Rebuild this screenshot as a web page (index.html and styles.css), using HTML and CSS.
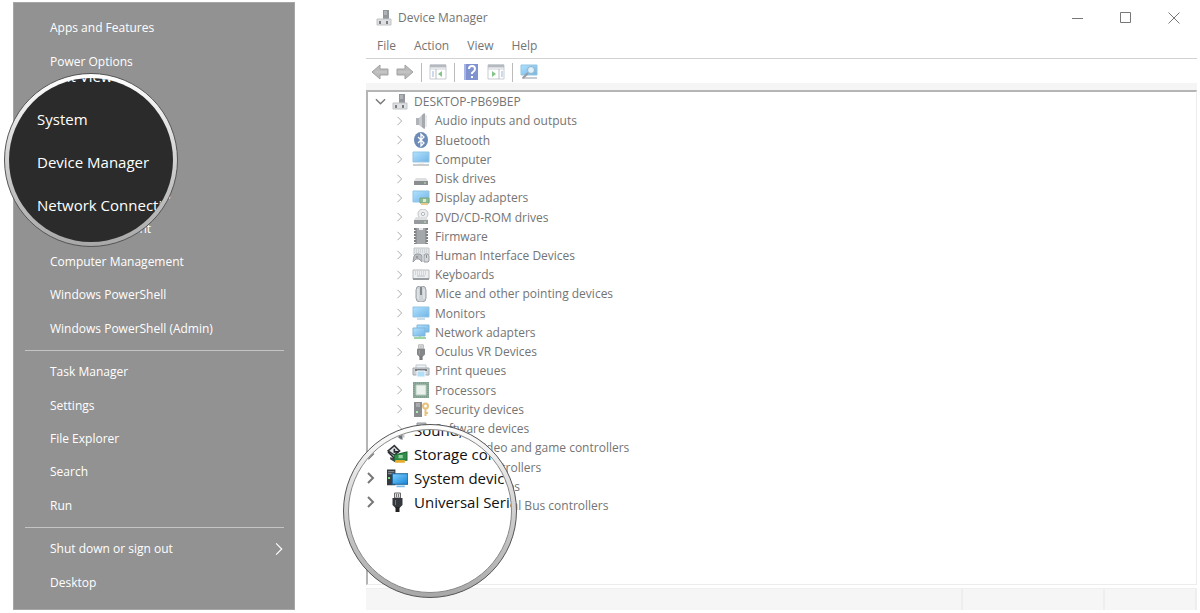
FILE: index.html
```html
<!DOCTYPE html>
<html lang="en">
<head>
    <meta charset="UTF-8">
    <meta name="viewport" content="width=device-width, initial-scale=1.0">
    <title>Device Manager</title>
    <link rel="stylesheet" href="styles.css">
</head>
<body>
    <svg class="sprite" aria-hidden="true">
        <linearGradient id="screen" x1="0" y1="0" x2="1" y2="1">
            <stop offset="0" stop-color="#7fd0ff"/>
            <stop offset="1" stop-color="#1583d6"/>
        </linearGradient>
        <symbol id="computer-root" viewBox="0 0 16 16">
            <path d="M7 0h6v9H7z" fill="#4c5258"/>
            <path d="M8 2h3M8 4h3" stroke="#aab0b5"/>
            <path d="M1 9h14v6H1z" fill="#c9cdd1" stroke="#979da3"/>
            <path d="M3 11h2v3H3zM10 11h2v3h-2z" fill="#22262a"/>
        </symbol>
        <symbol id="speaker" viewBox="0 0 16 16">
            <path d="M3 5h3v7H3z" fill="#7c8288"/>
            <path d="M6 5l5-5v16l-5-4z" fill="#a3a8ad"/>
            <path d="M9 2l3-2v16l-3-2z" fill="#6a7076"/>
            <path d="M13 2v12" stroke="#b5babf"/>
        </symbol>
        <symbol id="bluetooth" viewBox="0 0 16 16">
            <ellipse cx="8" cy="8" rx="7" ry="8" fill="#0b3f86"/>
            <path d="M5 5l6 6-3 3V2l3 3-6 6" fill="none" stroke="#fff" stroke-width="1.3"/>
        </symbol>
        <symbol id="computer" viewBox="0 0 18 16">
            <path d="M1 1h16v10H1z" fill="url(#screen)" stroke="#4d9fd0"/>
            <path d="M1 14h16" stroke="#8a9299" stroke-width="1.500"/>
            <path d="M6 12h6" stroke="#d0d4d8"/>
        </symbol>
        <symbol id="disk" viewBox="0 0 16 16">
            <path d="M3 7h10l2 3H1z" fill="#c8cbce"/>
            <path d="M1 10h14v4H1z" fill="#3d4247"/>
            <path d="M11 12h2" stroke="#7be37b"/>
        </symbol>
        <symbol id="display" viewBox="0 0 18 16">
            <path d="M1 1h16v11H1z" fill="url(#screen)" stroke="#4d9fd0"/>
            <path d="M8 8h9v5H8z" fill="#3f9350" stroke="#2b6b38"/>
            <path d="M9 14h7" stroke="#e0a93a" stroke-width="2"/>
            <path d="M11 9h3v3h-3z" fill="#c8dfa5"/>
        </symbol>
        <symbol id="dvd" viewBox="0 0 16 16">
            <circle cx="10" cy="5" r="5" fill="#e0e2e4" stroke="#9a9fa4"/>
            <circle cx="10" cy="5" r="1.6" fill="#fff" stroke="#80868c"/>
            <path d="M3 8h10l2 3H1z" fill="#c8cbce"/>
            <path d="M1 11h14v4H1z" fill="#54595e"/>
            <path d="M11 13h2" stroke="#7be37b"/>
        </symbol>
        <symbol id="firmware" viewBox="0 0 16 16">
            <path d="M3 0h10v16H3z" fill="#6b6f73"/>
            <path d="M2 0v16M14 0v16" stroke="#2a2d30" stroke-width="2" stroke-dasharray="2 1"/>
            <path d="M3 0v16M13 0v16" stroke="#2a2d30"/>
            <path d="M6 0h4v2H6z" fill="#ddd"/>
        </symbol>
        <symbol id="hid" viewBox="0 0 18 16">
            <path d="M2 1h15v7H2z" fill="#d5d9dd" stroke="#989ea4"/>
            <path d="M4 3h11M4 5h11" stroke="#8d949b" stroke-dasharray="1 1"/>
            <path d="M1 15l1-6 2-2h4l2 2v6l-3-3H4z" fill="#8d949c" stroke="#565d64"/>
            <path d="M12 15V9l1-2h3l1 2v5l-1 1z" fill="#b7bdc4" stroke="#565d64"/>
            <path d="M14.500 8v3M5 9v2M4 10h2" stroke="#3b4148"/>
        </symbol>
        <symbol id="keyboard" viewBox="0 0 18 16">
            <path d="M1 3h16v9H1z" fill="#e2e4e6" stroke="#898f95"/>
            <path d="M3 5h12M3 7h12" stroke="#8d9399" stroke-dasharray="1 1"/>
            <path d="M5 9h8" stroke="#8d9399"/>
            <path d="M1 12h16" stroke="#565c62" stroke-width="2"/>
        </symbol>
        <symbol id="mouse" viewBox="0 0 16 16">
            <rect x="3" y="0" width="10" height="16" rx="4" fill="#aeb6bf" stroke="#5d656e"/>
            <path d="M8 1v8" stroke="#2f3840" stroke-width="2"/>
            <path d="M5 3v10M11 3v10" stroke="#e2e6ea"/>
        </symbol>
        <symbol id="monitor" viewBox="0 0 18 16">
            <path d="M1 2h16v10H1z" fill="url(#screen)" stroke="#4d9fd0"/>
            <path d="M5 14h8" stroke="#a8c5d8" stroke-width="2"/>
        </symbol>
        <symbol id="network" viewBox="0 0 18 16">
            <path d="M5 1h12v7H5z" fill="url(#screen)" stroke="#2f87c0"/>
            <path d="M1 4h12v8H1z" fill="url(#screen)" stroke="#2f87c0"/>
            <path d="M2 14h12" stroke="#5db867" stroke-width="2"/>
            <path d="M8 12v3" stroke="#5db867" stroke-width="2"/>
        </symbol>
        <symbol id="usb" viewBox="0 0 16 20">
            <path d="M5 1h6v5H5z" fill="#e4e4e4" stroke="#6b6b6b"/>
            <path d="M7 2v3M9 2v3" stroke="#777"/>
            <path d="M3 6h10v7l-3 3H6l-3-3z" fill="#34383c"/>
            <path d="M6 15h4v5H6z" fill="#222"/>
            <path d="M6 8v5" stroke="#777"/>
        </symbol>
        <symbol id="printer" viewBox="0 0 18 16">
            <path d="M4 2h10v4H4z" fill="#e6eef5" stroke="#9aa4ad"/>
            <path d="M1 5h16v7H1z" fill="#aeb5bc" stroke="#6a727a"/>
            <path d="M3 7h12" stroke="#222a32" stroke-width="2"/>
            <path d="M5 8h8v6H5z" fill="#7ec8f5" stroke="#f4f9fc"/>
        </symbol>
        <symbol id="cpu" viewBox="0 0 16 16">
            <path d="M0 0h16v16H0z" fill="#2d6044"/>
            <path d="M3 3h10v10H3z" fill="#dfe8e2" stroke="#8fb09c"/>
            <path d="M1 1h14v14H1z" fill="none" stroke="#5d8a70" stroke-dasharray="1 1"/>
        </symbol>
        <symbol id="security" viewBox="0 0 16 16">
            <path d="M1 1h8v15H1z" fill="#3c4146"/>
            <path d="M3 3h4M3 5h4" stroke="#a8adb2"/>
            <path d="M3 10h2v2H3z" fill="#7be37b"/>
            <circle cx="12.500" cy="5" r="2.500" fill="#fff" stroke="#d99a26" stroke-width="2"/>
            <path d="M12.500 8v7M12 12h3" stroke="#d99a26" stroke-width="2"/>
        </symbol>
        <symbol id="software" viewBox="0 0 16 16">
            <path d="M4 2h9v12H4z" fill="#8d949b" stroke="#4c5258"/>
            <path d="M6 5h5M6 7h5" stroke="#eee"/>
        </symbol>
        <symbol id="storage" viewBox="0 0 20 18">
            <path d="M1 6l6-5 5 5-5 4z" fill="#e0e2e4" stroke="#33383d" stroke-width="1.500"/>
            <path d="M7 4v3h4M1 7l6 6" fill="none" stroke="#25292d" stroke-width="1.500"/>
            <path d="M3 12l5 1v4l-5-3z" fill="#40454a"/>
            <path d="M7 10l12-3v8H7z" fill="#2f8f4a" stroke="#1c6530"/>
            <path d="M11 10h4v3h-4z" fill="#95cfa2"/>
            <path d="M8 16h9" stroke="#e4ac2f" stroke-width="2.500"/>
        </symbol>
        <symbol id="system" viewBox="0 0 20 18">
            <path d="M0 1h8v15H0z" fill="#353b41"/>
            <path d="M1 3h6M1 5h6" stroke="#98a0a8"/>
            <path d="M1 8h2v2H1z" fill="#7be37b"/>
            <path d="M5 5h15v10H5z" fill="url(#screen)" stroke="#1b5f94"/>
            <path d="M9 17h8" stroke="#7ec0ea" stroke-width="1.500"/>
        </symbol>
        <symbol id="chevron" viewBox="0 0 8 12">
            <path d="M1 1l5 5-5 5" fill="none" stroke="currentColor"/>
        </symbol>
        <symbol id="arrow" viewBox="0 0 18 16">
            <path d="M1 8l8-7v4h8v6H9v4z" fill="#8e8e8e" stroke="#666"/>
            <path d="M4 8h12" stroke="#aaa"/>
        </symbol>
        <symbol id="panel" viewBox="0 0 18 16">
            <path d="M1 1h16v14H1z" fill="#fff" stroke="#a3abb3"/>
            <path d="M1 2h16" stroke="#848d98" stroke-width="3"/>
            <path d="M1 5h16" stroke="#aab2ba"/>
        </symbol>
    </svg>

    <nav class="power-menu" aria-label="Quick links">
        <button>Apps and Features</button>
        <button>Power Options</button>
        <button>Event Viewer</button>
        <button>System</button>
        <button>Device Manager</button>
        <button>Network Connections</button>
        <button>Disk Management</button>
        <button>Computer Management</button>
        <button>Windows PowerShell</button>
        <button>Windows PowerShell (Admin)</button>
        <hr>
        <button>Task Manager</button>
        <button>Settings</button>
        <button>File Explorer</button>
        <button>Search</button>
        <button>Run</button>
        <hr>
        <button>Shut down or sign out <svg class="more"><use href="#chevron"/></svg></button>
        <button>Desktop</button>
    </nav>

    <main class="window">
        <header class="title-bar">
            <svg class="icon"><use href="#computer-root"/></svg>
            <h1>Device Manager</h1>
            <div class="window-buttons">
                <button aria-label="Minimize"><svg viewBox="0 0 12 12"><path d="M0 6.500h11"/></svg></button>
                <button aria-label="Maximize"><svg viewBox="0 0 12 12"><path d="M.5.500h10v10H.5z"/></svg></button>
                <button aria-label="Close"><svg viewBox="0 0 12 12"><path d="M.5.500l11 11M11.500.500l-11 11"/></svg></button>
            </div>
        </header>
        <div class="menu-bar">
            <button>File</button>
            <button>Action</button>
            <button>View</button>
            <button>Help</button>
        </div>
        <div class="toolbar">
            <button aria-label="Back"><svg><use href="#arrow"/></svg></button>
            <button aria-label="Forward"><svg class="flip"><use href="#arrow"/></svg></button>
            <span class="separator"></span>
            <button aria-label="Show console tree"><svg viewBox="0 0 18 16"><use href="#panel"/><path d="M7 5v10" stroke="#8c959e"/><path d="M3 8h2M3 10h2M3 12h2" stroke="#5b84b8"/><path d="M13 7v6l-4-3z" fill="#31a03c"/></svg></button>
            <span class="separator"></span>
            <button aria-label="Help"><svg viewBox="0 0 18 16"><path d="M2 0h14v16H2z" fill="#2c4bb0"/><path d="M2 0h2v16H2z" fill="#6d86d6"/><path d="M7 5q0-3 3-3t3 3q0 2-3 4v1M10 12v2" fill="none" stroke="#fff" stroke-width="2"/></svg></button>
            <button aria-label="Show action pane"><svg viewBox="0 0 18 16"><use href="#panel"/><path d="M12 5v10" stroke="#8c959e"/><path d="M14 8h2M14 10h2M14 12h2" stroke="#5b84b8"/><path d="M5 7v6l4-3z" fill="#31a03c"/></svg></button>
            <span class="separator"></span>
            <button aria-label="Scan for hardware changes"><svg viewBox="0 0 18 16"><path d="M1 1h16v10H1z" fill="url(#screen)" stroke="#4d9fd0"/><path d="M2 14h15" stroke="#a5abb1" stroke-width="2"/><circle cx="11" cy="6" r="3.500" fill="#c5e8fb" stroke="#4b7c9c"/><path d="M8 9l-5 5" stroke="#4f5a63" stroke-width="2"/></svg></button>
        </div>

        <ul class="tree">
            <li class="root"><svg class="open" viewBox="0 0 12 8"><path d="M1 1l5 5 5-5"/></svg><svg class="icon"><use href="#computer-root"/></svg>DESKTOP-PB69BEP</li>
            <li><svg class="arrow"><use href="#chevron"/></svg><svg class="icon"><use href="#speaker"/></svg>Audio inputs and outputs</li>
            <li><svg class="arrow"><use href="#chevron"/></svg><svg class="icon"><use href="#bluetooth"/></svg>Bluetooth</li>
            <li><svg class="arrow"><use href="#chevron"/></svg><svg class="icon"><use href="#computer"/></svg>Computer</li>
            <li><svg class="arrow"><use href="#chevron"/></svg><svg class="icon"><use href="#disk"/></svg>Disk drives</li>
            <li><svg class="arrow"><use href="#chevron"/></svg><svg class="icon"><use href="#display"/></svg>Display adapters</li>
            <li><svg class="arrow"><use href="#chevron"/></svg><svg class="icon"><use href="#dvd"/></svg>DVD/CD-ROM drives</li>
            <li><svg class="arrow"><use href="#chevron"/></svg><svg class="icon"><use href="#firmware"/></svg>Firmware</li>
            <li><svg class="arrow"><use href="#chevron"/></svg><svg class="icon"><use href="#hid"/></svg>Human Interface Devices</li>
            <li><svg class="arrow"><use href="#chevron"/></svg><svg class="icon"><use href="#keyboard"/></svg>Keyboards</li>
            <li><svg class="arrow"><use href="#chevron"/></svg><svg class="icon"><use href="#mouse"/></svg>Mice and other pointing devices</li>
            <li><svg class="arrow"><use href="#chevron"/></svg><svg class="icon"><use href="#monitor"/></svg>Monitors</li>
            <li><svg class="arrow"><use href="#chevron"/></svg><svg class="icon"><use href="#network"/></svg>Network adapters</li>
            <li><svg class="arrow"><use href="#chevron"/></svg><svg class="icon"><use href="#usb"/></svg>Oculus VR Devices</li>
            <li><svg class="arrow"><use href="#chevron"/></svg><svg class="icon"><use href="#printer"/></svg>Print queues</li>
            <li><svg class="arrow"><use href="#chevron"/></svg><svg class="icon"><use href="#cpu"/></svg>Processors</li>
            <li><svg class="arrow"><use href="#chevron"/></svg><svg class="icon"><use href="#security"/></svg>Security devices</li>
            <li><svg class="arrow"><use href="#chevron"/></svg><svg class="icon"><use href="#software"/></svg>Software devices</li>
            <li><svg class="arrow"><use href="#chevron"/></svg><svg class="icon"><use href="#speaker"/></svg>Sound, video and game controllers</li>
            <li><svg class="arrow"><use href="#chevron"/></svg><svg class="icon"><use href="#storage"/></svg>Storage controllers</li>
            <li><svg class="arrow"><use href="#chevron"/></svg><svg class="icon"><use href="#system"/></svg>System devices</li>
            <li><svg class="arrow"><use href="#chevron"/></svg><svg class="icon"><use href="#usb"/></svg>Universal Serial Bus controllers</li>
        </ul>
        <footer class="status-bar"><span></span><span></span><span></span></footer>
    </main>

    <!-- magnifiers -->
    <div class="lens lens-dark" aria-hidden="true">
        <ul>
            <li>Event Viewer</li>
            <li>System</li>
            <li>Device Manager</li>
            <li>Network Connections</li>
            <li>Disk Management</li>
        </ul>
    </div>
    <div class="lens lens-light" aria-hidden="true">
        <ul>
            <li><svg class="arrow"><use href="#chevron"/></svg><svg class="icon"><use href="#speaker"/></svg>Sound,</li>
            <li><svg class="arrow"><use href="#chevron"/></svg><svg class="icon"><use href="#storage"/></svg>Storage controllers</li>
            <li><svg class="arrow"><use href="#chevron"/></svg><svg class="icon"><use href="#system"/></svg>System devices</li>
            <li><svg class="arrow"><use href="#chevron"/></svg><svg class="icon"><use href="#usb"/></svg>Universal Serial Bus</li>
        </ul>
    </div>
</body>
</html>
```
FILE: styles.css
```css
* {
    box-sizing: border-box;
}
body {
    display: flex;
    gap: 71px;
    height: 100vh;
    margin: 0;
    padding: 2px 3px 3px 13px;
    overflow: hidden;
    background: #fff;
    color: #747474;
    font-family: "Open Sans", "Noto Sans", sans-serif;
    font-size: 12px;
}
button {
    padding: 0;
    border: 0;
    background: none;
    color: inherit;
    font: inherit;
}
ul {
    margin: 0;
    padding: 0;
    list-style: none;
}
.sprite {
    position: absolute;
    width: 0;
    height: 0;
}

/* Win+X menu */
.power-menu {
    display: flex;
    flex-direction: column;
    flex: 0 0 282px;
    padding: 8px 10px 10px 11px;
    border: 1px solid #a6a6a6;
    background: #929292;
    color: #fff;
}
.power-menu button {
    display: flex;
    flex: 1;
    align-items: center;
    justify-content: space-between;
    padding-left: 25px;
    text-align: left;
}
.power-menu hr {
    width: 100%;
    height: 1px;
    margin: 5px 0 4px;
    border: 0;
    background: #c4c4c4;
}
.more {
    width: 9px;
    height: 14px;
}

/* Device Manager window */
.window {
    display: flex;
    flex: 1;
    flex-direction: column;
    min-width: 0;
}
.icon {
    flex: none;
    width: 18px;
    height: 16px;
    opacity: 0.6;
}
.title-bar {
    display: flex;
    align-items: center;
    gap: 5px;
    height: 31px;
    padding: 0 17px 0 9px;
}
.title-bar h1 {
    flex: 1;
    margin: 0;
    font-size: 12px;
    font-weight: normal;
}
.window-buttons {
    display: flex;
    gap: 36px;
}
.window-buttons svg {
    display: block;
    width: 12px;
    height: 12px;
    fill: none;
    stroke: #777;
}
.menu-bar {
    display: flex;
    gap: 18px;
    height: 26px;
    padding-left: 11px;
    border-bottom: 1px solid #d2d2d2;
}
.toolbar {
    display: flex;
    align-items: center;
    gap: 7px;
    height: 31px;
    padding: 2px 5px 0;
    border-bottom: 7px solid #f5f5f5;
}
.toolbar svg {
    display: block;
    width: 18px;
    height: 16px;
    opacity: 0.6;
}
.toolbar .flip {
    transform: scaleX(-1);
}
.separator {
    width: 1px;
    height: 19px;
    background: #bbb;
}
.tree {
    display: flex;
    flex: 1;
    flex-direction: column;
    padding-bottom: 69px;
    border: 1px solid #ededed;
    border-top: 2px solid #b5b5b5;
    border-left: 2px solid #b5b5b5;
}
.tree li {
    display: flex;
    flex: 1;
    align-items: center;
    gap: 5px;
    min-height: 17px;
    padding-left: 28px;
    line-height: 17px;
}
.tree .root {
    padding-left: 7px;
}
.open {
    width: 11px;
    height: 8px;
    fill: none;
    stroke: #777;
    stroke-width: 1.5;
}
.arrow {
    flex: none;
    width: 8px;
    height: 10px;
    margin-right: 3px;
    color: #999;
}
.status-bar {
    display: flex;
    height: 22px;
    margin-top: 3px;
    border-top: 1px solid #efefef;
    background: #f6f6f6;
}
.status-bar span {
    flex: 0 0 92px;
    border-right: 2px solid #eee;
}
.status-bar span:first-child {
    flex: 1;
}
.status-bar span:nth-child(2) {
    flex-basis: 142px;
}

/* round magnifiers over both panels */
.lens {
    position: absolute;
    width: 174px;
    height: 174px;
    padding: 4px;
    border: 1px solid #555;
    border-radius: 50%;
    background: linear-gradient(#fff, #ccc 55%, #a8a8a8);
}
.lens ul {
    height: 100%;
    overflow: hidden;
    border-radius: 50%;
    white-space: nowrap;
}
.lens-dark {
    top: 73px;
    left: 4px;
}
.lens-dark ul {
    padding: 0 0 0 28px;
    background: #2b2b2b;
    color: #fff;
    font-size: 15px;
}
.lens-dark li {
    height: 43px;
    line-height: 43px;
}
.lens-dark li:first-child {
    margin-top: -23px;
}
.lens-light {
    top: 424px;
    left: 343px;
}
.lens-light ul {
    padding-left: 18px;
    border: 1px solid #888;
    background: #fff;
    color: #111;
    font-size: 15px;
}
.lens-light li {
    display: flex;
    align-items: center;
    gap: 6px;
    height: 24px;
}
.lens-light li:first-child {
    margin-top: -12px;
}
.lens-light .icon {
    width: 21px;
    height: 20px;
    opacity: 1;
}
.lens-light .arrow {
    height: 12px;
    margin-right: 6px;
    color: #777;
    stroke-width: 2;
}
```
